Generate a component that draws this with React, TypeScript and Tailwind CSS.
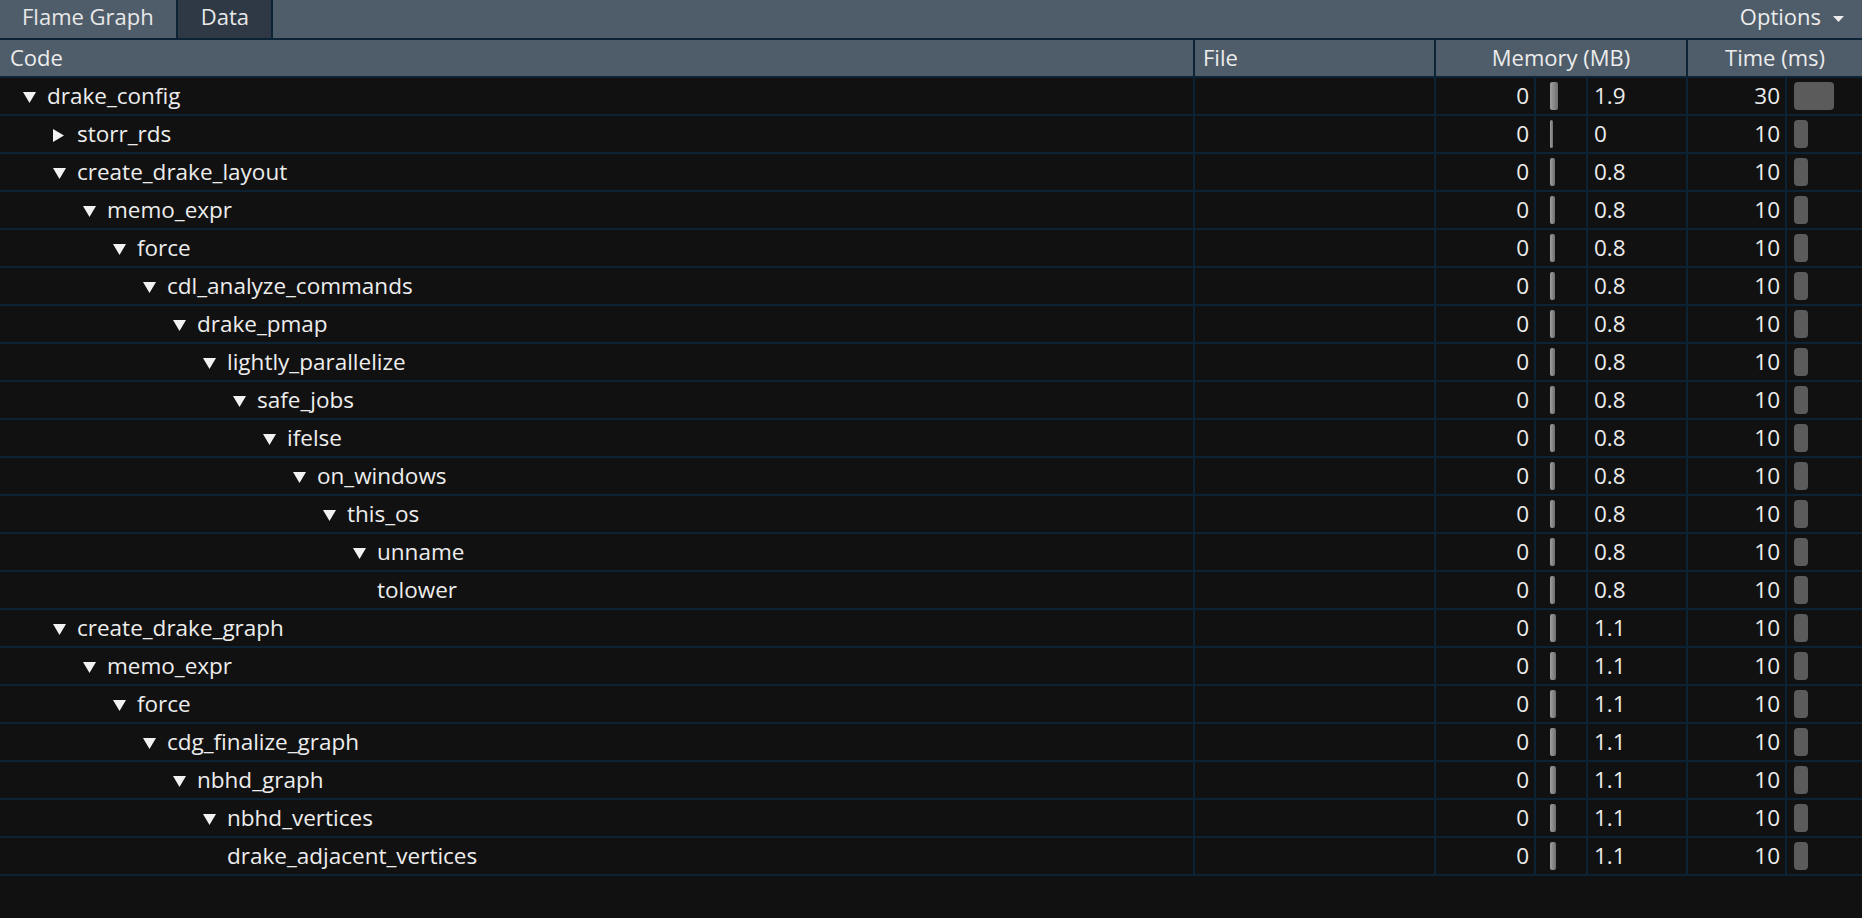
import React from "react";

type Row = {
  level: number;
  name: string;
  kind: "open" | "closed" | "leaf";
  mem: string;
  time: string;
};

const rows: Row[] = [
  { level: 0, name: "drake_config", kind: "open", mem: "1.9", time: "30" },
  { level: 1, name: "storr_rds", kind: "closed", mem: "0", time: "10" },
  { level: 1, name: "create_drake_layout", kind: "open", mem: "0.8", time: "10" },
  { level: 2, name: "memo_expr", kind: "open", mem: "0.8", time: "10" },
  { level: 3, name: "force", kind: "open", mem: "0.8", time: "10" },
  { level: 4, name: "cdl_analyze_commands", kind: "open", mem: "0.8", time: "10" },
  { level: 5, name: "drake_pmap", kind: "open", mem: "0.8", time: "10" },
  { level: 6, name: "lightly_parallelize", kind: "open", mem: "0.8", time: "10" },
  { level: 7, name: "safe_jobs", kind: "open", mem: "0.8", time: "10" },
  { level: 8, name: "ifelse", kind: "open", mem: "0.8", time: "10" },
  { level: 9, name: "on_windows", kind: "open", mem: "0.8", time: "10" },
  { level: 10, name: "this_os", kind: "open", mem: "0.8", time: "10" },
  { level: 11, name: "unname", kind: "open", mem: "0.8", time: "10" },
  { level: 12, name: "tolower", kind: "leaf", mem: "0.8", time: "10" },
  { level: 1, name: "create_drake_graph", kind: "open", mem: "1.1", time: "10" },
  { level: 2, name: "memo_expr", kind: "open", mem: "1.1", time: "10" },
  { level: 3, name: "force", kind: "open", mem: "1.1", time: "10" },
  { level: 4, name: "cdg_finalize_graph", kind: "open", mem: "1.1", time: "10" },
  { level: 5, name: "nbhd_graph", kind: "open", mem: "1.1", time: "10" },
  { level: 6, name: "nbhd_vertices", kind: "open", mem: "1.1", time: "10" },
  { level: 7, name: "drake_adjacent_vertices", kind: "leaf", mem: "1.1", time: "10" },
];

const memBar: Record<string, string> = {
  "1.9": "w-[8px]",
  "0": "w-[3px]",
  "0.8": "w-[5px]",
  "1.1": "w-[6px]",
};

const timeBar: Record<string, string> = {
  "30": "w-[40px]",
  "10": "w-[14px]",
};

function Tri({ kind }: { kind: "open" | "closed" }) {
  return (
    <span className="w-[24px] shrink-0 flex items-center translate-y-[1px]">
      {kind === "open" ? (
        <svg width="13" height="11" viewBox="0 0 13 11">
          <polygon points="0,0 13,0 6.5,11" fill="#f2f2f2" />
        </svg>
      ) : (
        <svg width="11" height="13" viewBox="0 0 11 13">
          <polygon points="0,0 11,6.5 0,13" fill="#f2f2f2" />
        </svg>
      )}
    </span>
  );
}

export default function App() {
  return (
    <div
      className="w-full min-h-screen h-[918px] bg-[#111111] text-[#ededed] text-[22.5px] overflow-hidden"
      style={{ fontFamily: '"Open Sans", "Noto Sans", sans-serif' }}
    >
      {/* Tab bar */}
      <div className="h-[40px] flex bg-[#4f5d6a] border-b-2 border-[#0c2235] text-[22px]">
        <div className="px-[22px] pb-[5px] flex items-center border-r-2 border-[#0c2235] text-[#e8e8e8]">
          Flame Graph
        </div>
        <div className="pl-[23px] pr-[22px] pb-[5px] flex items-center bg-[#2e3945] border-r-2 border-[#0c2235] text-[#e8e8e8]">
          Data
        </div>
        <div className="flex-1" />
        <div className="flex items-center pr-[18px] pb-[5px] text-[#ececec]">
          <span>Options</span>
          <svg className="ml-[12px] translate-y-[2px]" width="11" height="6" viewBox="0 0 11 6">
            <polygon points="0,0 11,0 5.5,6" fill="#ececec" />
          </svg>
        </div>
      </div>

      {/* Header */}
      <div className="h-[38px] flex bg-[#4f5d6a] border-b-2 border-[#0c2235] text-[#ececec] text-[22px]">
        <div className="w-[1195px] shrink-0 border-r-2 border-[#0c2235] pl-[10px] pb-[2px] flex items-center">
          Code
        </div>
        <div className="w-[241px] shrink-0 border-r-2 border-[#0c2235] pl-[8px] pb-[2px] flex items-center">
          File
        </div>
        <div className="w-[252px] shrink-0 border-r-2 border-[#0c2235] pb-[2px] flex items-center justify-center">
          Memory (MB)
        </div>
        <div className="flex-1 flex items-center justify-center pb-[2px]">Time (ms)</div>
      </div>

      {/* Rows */}
      {rows.map((r, i) => (
        <div key={i} className="h-[38px] flex border-b-2 border-[#0c2235]">
          <div
            className="w-[1195px] shrink-0 border-r-2 border-[#0c2235] flex items-center whitespace-nowrap"
            style={{ paddingLeft: r.kind === "leaf" ? 17 + r.level * 30 : 23 + r.level * 30 }}
          >
            {r.kind !== "leaf" && <Tri kind={r.kind} />}
            <span>{r.name}</span>
          </div>
          <div className="w-[241px] shrink-0 border-r-2 border-[#0c2235]" />
          <div className="w-[252px] shrink-0 border-r-2 border-[#0c2235] flex">
            <div className="w-[100px] shrink-0 border-r-2 border-[#0c2235] flex items-center justify-end pr-[5px]">
              0
            </div>
            <div className="w-[52px] shrink-0 border-r-2 border-[#0c2235] flex items-center pl-[14px]">
              <div
                className={`${memBar[r.mem]} h-[28px] rounded-[2px] bg-gradient-to-r from-[#a0a0a0] to-[#6e6e6e]`}
              />
            </div>
            <div className="flex-1 flex items-center pl-[6px]">{r.mem}</div>
          </div>
          <div className="flex-1 flex">
            <div className="w-[99px] shrink-0 border-r-2 border-[#0c2235] flex items-center justify-end pr-[5px]">
              {r.time}
            </div>
            <div className="flex-1 flex items-center pl-[7px]">
              <div className={`${timeBar[r.time]} h-[28px] rounded-[4px] bg-[#5b5b5b]`} />
            </div>
          </div>
        </div>
      ))}
    </div>
  );
}
